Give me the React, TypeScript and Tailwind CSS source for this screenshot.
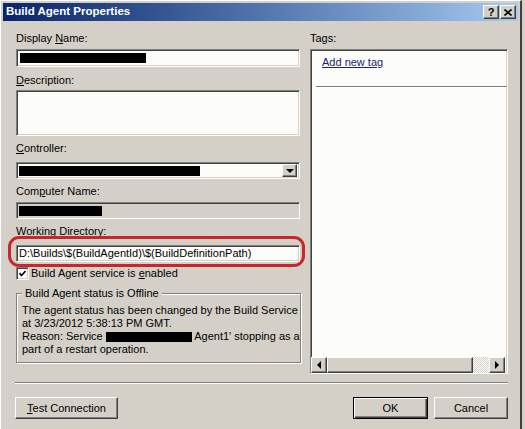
const raised =
  'border border-t-white border-l-white border-r-[#404040] border-b-[#404040] shadow-[inset_-1px_-1px_0_#808080] bg-[#d4d0c8]';
const sunken =
  'border border-t-[#808080] border-l-[#808080] border-r-white border-b-white shadow-[inset_1px_1px_0_#404040,inset_-1px_-1px_0_#d4d0c8]';

const Label = ({ children, className = '' }: { children: React.ReactNode; className?: string }) => (
  <div className={`h-[13px] leading-[13px] ${className}`}>{children}</div>
);

const Arrow = ({ dir }: { dir: 'left' | 'right' | 'down' }) => {
  const pts = dir === 'left' ? '5,1 5,9 1,5' : dir === 'right' ? '1,1 1,9 5,5' : '0,1 8,1 4,5';
  const w = dir === 'down' ? 8 : 6;
  const h = dir === 'down' ? 6 : 10;
  return (
    <svg width={w} height={h} viewBox={`0 0 ${w} ${h}`}>
      <polygon points={pts} fill="#000" />
    </svg>
  );
};

export default function App() {
  return (
    <div className="relative h-[429px] w-[525px] overflow-hidden bg-[#d4d0c8] font-['Liberation_Sans',Arial,sans-serif] text-[11px] text-black">
      <div className="flex h-[429px] w-[522px] flex-col border-l border-t border-white border-r-2 border-r-[#404040] p-[2px]">
        {/* title bar */}
        <div className="flex h-[18px] items-center bg-gradient-to-r from-[#0a246a] to-[#a6caf0] pl-[3px] pr-[2px]">
          <span className="text-[11.5px] font-bold text-white">Build Agent Properties</span>
          <div className={`ml-auto flex h-[14px] w-[16px] items-center justify-center text-[11px] font-bold leading-none ${raised}`}>?</div>
          <div className={`ml-[1px] flex h-[14px] w-[16px] items-center justify-center ${raised}`}>
            <svg width="8" height="7" viewBox="0 0 8 7">
              <path d="M0.5 0.5 L7.5 6.5 M7.5 0.5 L0.5 6.5" stroke="#000" strokeWidth="1.6" />
            </svg>
          </div>
        </div>

        <div className="flex w-[507px] flex-col pl-[12px]">
          <div className="flex gap-[10px]">
            {/* left column */}
            <div className="ml-[1px] flex w-[284px] flex-col">
              <Label className="mt-[11px]">
                Display <u>N</u>ame:
              </Label>
              <div className={`mt-[4px] flex h-[18px] items-center bg-[#fcfdf8] pl-[3px] ${sunken}`}>
                <span className="h-[10px] w-[126px] bg-black" />
              </div>
              <Label className="mt-[7px]">
                <u>D</u>escription:
              </Label>
              <div className={`mt-[3px] h-[46px] bg-[#fcfdf8] ${sunken}`} />
              <Label className="mt-[6px]">
                <u>C</u>ontroller:
              </Label>
              <div className={`mt-[7px] flex h-[17px] items-center bg-[#fcfdf8] pl-[2px] pr-[2px] ${sunken}`}>
                <span className="h-[10px] w-[181px] bg-black" />
                <div className={`ml-auto flex h-[13px] w-[15px] items-center justify-center ${raised}`}>
                  <Arrow dir="down" />
                </div>
              </div>
              <Label className="mt-[6px]">
                Com<u>p</u>uter Name:
              </Label>
              <div className={`mt-[4px] flex h-[17px] items-center bg-[#d4d0c8] pl-[2px] ${sunken}`}>
                <span className="h-[10px] w-[83px] bg-black" />
              </div>
              <Label className="mt-[6px]">
                Wor<u>k</u>ing Directory:
              </Label>
              <div className={`mt-[7px] flex h-[17px] items-center bg-[#fcfdf8] pl-[2px] text-[11px] ${sunken}`}>
                D:\Builds\$(BuildAgentId)\$(BuildDefinitionPath)
              </div>
              <div className="mt-[5px] flex h-[13px] items-center gap-[2px]">
                <div className={`flex h-[13px] w-[13px] items-center justify-center bg-white ${sunken}`}>
                  <svg width="7" height="7" viewBox="0 0 7 7">
                    <path d="M0.5 3 L2.5 5.5 L6.5 1" stroke="#000" strokeWidth="1.6" fill="none" />
                  </svg>
                </div>
                <span className="leading-[13px]">
                  Build Agent service is <u>e</u>nabled
                </span>
              </div>
              <fieldset className="mt-[7px] border border-[#808080] pb-[6px] pl-[5px] pt-[4px] shadow-[1px_1px_0_white,inset_1px_1px_0_white]">
                <legend className="bg-[#d4d0c8] px-[3px] leading-[13px]">Build Agent status is Offline</legend>
                <div className="leading-[13px]">
                  <div>The agent status has been changed by the Build Service</div>
                  <div>at 3/23/2012 5:38:13 PM GMT.</div>
                  <div className="flex items-center">
                    <span className="whitespace-pre">Reason: Service </span>
                    <span className="h-[10px] w-[86px] bg-black" />
                    <span className="whitespace-pre"> Agent1' stopping as a</span>
                  </div>
                  <div>part of a restart operation.</div>
                </div>
              </fieldset>
            </div>

            {/* right column */}
            <div className="flex w-[198px] flex-col">
              <Label className="mt-[11px]">Tags:</Label>
              <div className={`mt-[4px] flex h-[325px] flex-col bg-[#fcfdf8] ${sunken}`}>
                <div className="pl-[11px] pt-[6px] leading-[13px]">
                  <span className="text-[#1b2470] underline">Add new tag</span>
                </div>
                <div className="ml-[5px] mt-[17px] h-[2px] border-t border-b border-t-[#808080] border-b-white" />
                <div className="mt-auto flex h-[16px]">
                  <div className={`flex w-[16px] items-center justify-center ${raised}`}>
                    <Arrow dir="left" />
                  </div>
                  <div className={`w-[146px] ${raised}`} />
                  <div className="w-[16px] bg-[repeating-conic-gradient(#ffffff_0_25%,#d4d0c8_0_50%)] bg-[length:2px_2px]" />
                  <div className={`flex w-[16px] items-center justify-center ${raised}`}>
                    <Arrow dir="right" />
                  </div>
                </div>
              </div>
            </div>
          </div>

          <div className="mt-[8px] h-[2px] w-[493px] border-t border-b border-t-[#808080] border-b-white" />

          <div className="mt-[13px] flex w-[493px] gap-[6px]">
            <div className={`flex h-[22px] w-[103px] items-center justify-center ${raised} shadow-[inset_-1px_-1px_0_#808080,inset_1px_1px_0_#ecebe7]`}>
              <span>
                <u>T</u>est Connection
              </span>
            </div>
            <div className="ml-auto flex h-[22px] w-[75px] items-center justify-center border border-black bg-[#d4d0c8] shadow-[inset_1px_1px_0_white,inset_-1px_-1px_0_#404040,inset_-2px_-2px_0_#808080]">
              OK
            </div>
            <div className={`flex h-[22px] w-[74px] items-center justify-center ${raised}`}>Cancel</div>
          </div>
        </div>
      </div>

      {/* red annotation around the working directory field */}
      <div className="pointer-events-none absolute left-[8px] top-[236px] h-[31px] w-[297px] rounded-[11px] border-[3px] border-[#c8262b]" />
    </div>
  );
}
